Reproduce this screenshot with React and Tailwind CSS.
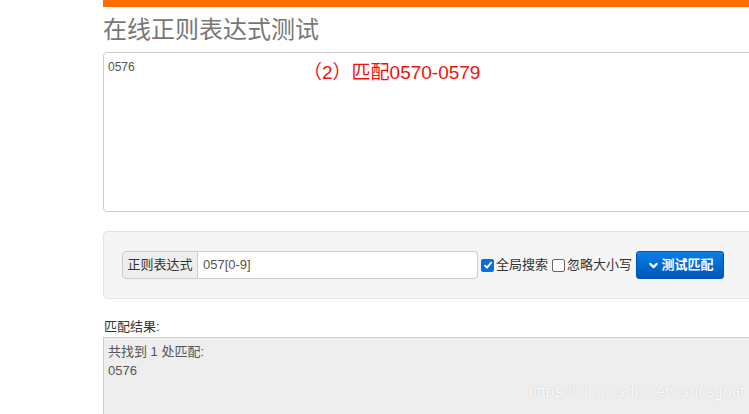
import { ChevronDown } from "lucide-react"

const App = () => {
  return (
    <div className="w-[749px] h-[414px] overflow-hidden bg-white pl-[103px] font-['Liberation_Sans','Noto_Sans_CJK_SC',sans-serif]">
      <div className="w-[700px]">
        <div className="h-[7px] bg-[#ff6c00]"></div>
        <h1 className="mt-[8px] text-[24px] leading-[30px] text-[#777]">在线正则表达式测试</h1>

        <div className="relative mt-[7px] h-[160px] border border-[#ccc] rounded-[4px] bg-white px-[4px] pt-[5px]">
          <div className="text-[12px] leading-[18px] text-[#555]">0576</div>
          <div className="absolute left-[199px] top-[8px] text-[19px] leading-[24px] text-[#ee1111]">（2）匹配0570-0579</div>
        </div>

        <div className="mt-[19px] h-[68px] border border-[#e3e3e3] rounded-[4px] bg-[#f5f5f5] pl-[18px] pt-[19px]">
          <div className="flex items-center">
            <div className="flex h-[28px]">
              <div className="w-[76px] flex items-center justify-center border border-[#ccc] rounded-l-[4px] bg-[#eee] text-[13px] text-[#333]">正则表达式</div>
              <div className="w-[280px] flex items-center border border-l-0 border-[#ccc] rounded-r-[4px] bg-white pl-[5px] text-[13px] text-[#555]">057[0-9]</div>
            </div>
            <div className="ml-[3px] w-[13px] h-[13px] rounded-[2px] bg-[#0b6fd8] flex items-center justify-center">
              <svg width="10" height="10" viewBox="0 0 10 10"><path d="M1.5 5.2 L4 7.6 L8.6 2.2" stroke="white" strokeWidth="1.8" fill="none" /></svg>
            </div>
            <span className="ml-[2px] text-[13px] text-[#333]">全局搜索</span>
            <div className="ml-[4px] w-[13px] h-[13px] rounded-[2px] border border-[#666] bg-white"></div>
            <span className="ml-[2px] text-[13px] text-[#333]">忽略大小写</span>
            <button className="ml-[4px] w-[88px] h-[28px] flex items-center justify-center gap-[2px] rounded-[3px] border border-[#0052b0] bg-gradient-to-b from-[#0a80e8] to-[#0056ba] text-[13px] text-white font-bold">
              <ChevronDown size={13} strokeWidth={4} />
              测试匹配
            </button>
          </div>
        </div>

        <div className="mt-[19px] text-[13px] leading-[18px] text-[#333] pl-[1px]">匹配结果:</div>
        <div className="relative mt-[1px] h-[90px] border border-[#ccc] bg-[#eee] pl-[4px] pt-[4px] text-[13px] leading-[19px] text-[#555]">
          <div>共找到 1 处匹配:</div>
          <div>0576</div>
          <div className="absolute left-[424px] top-[44px] text-[16px] tracking-[-0.1px] text-[#fbfbfb] [text-shadow:0_0_1px_#bbb]">https://blog.csdn.net/csucsgoat</div>
        </div>
      </div>
    </div>
  )
}
export default App
